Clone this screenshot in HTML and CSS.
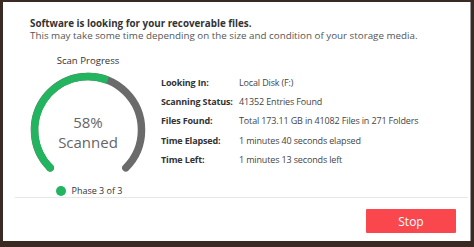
FILE: index.html
```html
<!DOCTYPE html>
<html lang="en">
<head>
    <meta charset="UTF-8">
    <title>Scanning</title>
    <link rel="stylesheet" href="styles.css">
</head>
<body>
    <div class="panel">
        <div class="header">
            <div class="title">Software is looking for your recoverable files.</div>
            <div class="subtitle">This may take some time depending on the size and condition of your storage media.</div>
        </div>
        <div class="main">
            <div class="gauge-col">
                <div class="gauge-label">Scan Progress</div>
                <div class="gauge">
                    <svg width="130" height="110" viewBox="0 0 130 110">
                        <path d="M27.17 99.83 A53.5 53.5 0 1 1 102.83 99.83" fill="none" stroke="#6b6b6b" stroke-width="7.5" stroke-linecap="round"/>
                        <path d="M27.17 99.83 A53.5 53.5 0 0 1 84.69 12.26" fill="none" stroke="#22b45e" stroke-width="7.5"/>
                        <circle cx="27.17" cy="99.83" r="3.75" fill="#22b45e"/>
                    </svg>
                    <div class="gauge-text">
                        <div>58%</div>
                        <div>Scanned</div>
                    </div>
                </div>
                <div class="phase"><span class="dot"></span>Phase 3 of 3</div>
            </div>
            <div class="info">
                <div class="label">Looking In:</div><div class="value">Local Disk (F:)</div>
                <div class="label">Scanning Status:</div><div class="value">41352 Entries Found</div>
                <div class="label">Files Found:</div><div class="value">Total 173.11 GB in 41082 Files in 271 Folders</div>
                <div class="label">Time Elapsed:</div><div class="value">1 minutes 40 seconds elapsed</div>
                <div class="label">Time Left:</div><div class="value">1 minutes 13 seconds left</div>
            </div>
        </div>
        <div class="footer">
            <button class="stop-button">Stop</button>
        </div>
    </div>
</body>
</html>
```

FILE: styles.css
```css
body {
    margin: 0;
    padding: 0;
    background-color: #3b2a23;
    font-family: "Open Sans", "Noto Sans", sans-serif;
    width: 474px;
    height: 247px;
    overflow: hidden;
}
.panel {
    margin: 2px 3px 0 3px;
    width: 467px;
    height: 239px;
    background-color: #fff;
    border-right: 1px solid #9a9a9a;
    display: flex;
    flex-direction: column;
}
.header {
    padding: 16px 0 0 27px;
}
.title {
    font-size: 9.8px;
    font-weight: bold;
    color: #333;
    line-height: 12px;
    white-space: nowrap;
}
.subtitle {
    font-size: 9.8px;
    color: #555;
    line-height: 12px;
    white-space: nowrap;
}
.main {
    display: flex;
    margin: 12px 2px 0 12px;
    padding-left: 20px;
    border-bottom: 1px solid #e8e8e8;
    height: 143px;
}
.gauge-col {
    width: 130px;
    margin-left: -12px;
    display: flex;
    flex-direction: column;
    align-items: center;
}
.gauge-label {
    font-size: 9.6px;
    color: #333;
    line-height: 14px;
}
.gauge {
    position: relative;
    width: 130px;
    height: 110px;
}
.gauge svg {
    display: block;
}
.gauge-text {
    position: absolute;
    left: 0;
    right: 0;
    top: 44px;
    text-align: center;
    font-size: 15px;
    color: #666;
    line-height: 20px;
}
.phase {
    display: flex;
    align-items: center;
    font-size: 9px;
    color: #333;
    line-height: 13px;
    margin-left: 3px;
    margin-top: 6px;
}
.dot {
    width: 10px;
    height: 10px;
    border-radius: 50%;
    background-color: #22b45e;
    margin-right: 5px;
}
.info {
    display: grid;
    grid-template-columns: 78px auto;
    grid-auto-rows: 19.2px;
    align-items: center;
    align-content: start;
    margin-left: 8px;
    margin-top: 19px;
    font-size: 9px;
    letter-spacing: -0.15px;
    color: #444;
    white-space: nowrap;
}
.label {
    font-weight: bold;
    color: #333;
}
.footer {
    display: flex;
    justify-content: flex-end;
    padding: 11px 14px 0 0;
}
.stop-button {
    width: 90px;
    height: 24px;
    border: none;
    border-radius: 1px;
    background-color: #f9474d;
    color: #fff;
    font-family: "Open Sans", sans-serif;
    font-size: 12px;
    cursor: pointer;
}
```
